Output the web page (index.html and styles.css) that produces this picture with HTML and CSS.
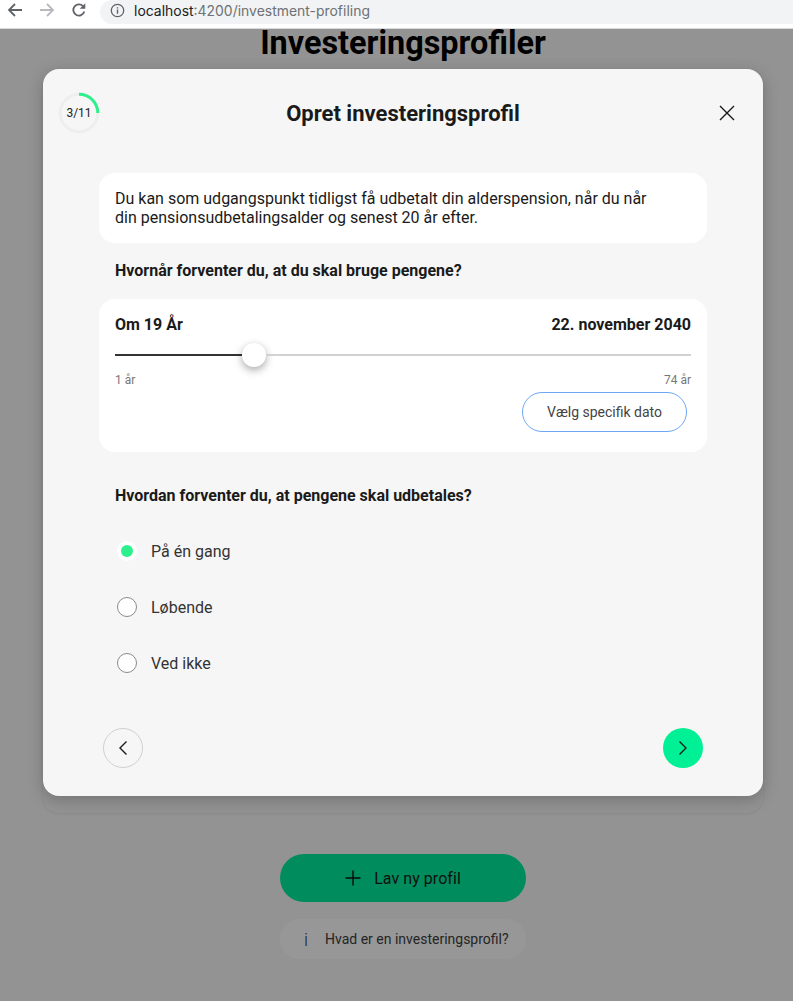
FILE: index.html
```html
<!DOCTYPE html>
<html lang="da">
<head>
<meta charset="utf-8">
<title>Investeringsprofiler</title>
<link rel="stylesheet" href="styles.css">
</head>
<body>
<header class="toolbar">
  <svg class="nav-icon" width="16" height="16" viewBox="0 0 16 16"><path d="M15 8H2M8 2L2 8l6 6" fill="none" stroke="#5f6368" stroke-width="1.8"/></svg>
  <svg class="nav-icon nav-fwd" width="16" height="16" viewBox="0 0 16 16"><path d="M1 8h13M8 2l6 6-6 6" fill="none" stroke="#b8babd" stroke-width="1.8"/></svg>
  <svg class="nav-icon nav-reload" width="16" height="16" viewBox="0 0 16 16"><path d="M13.3 9.6A5.6 5.6 0 1 1 12 4.1" fill="none" stroke="#5f6368" stroke-width="1.8"/><path d="M14.3 1.2v5.6H8.7z" fill="#5f6368"/></svg>
  <div class="url">
    <svg width="15" height="15" viewBox="0 0 15 15"><circle cx="7.5" cy="7.5" r="6.2" fill="none" stroke="#5f6368" stroke-width="1.3"/><path d="M7.5 6.6v4.2M7.5 4.2v1.4" stroke="#5f6368" stroke-width="1.4"/></svg>
    <span class="url-host">localhost</span><span class="url-path">:4200/investment-profiling</span>
  </div>
</header>
<main class="page">
  <h1 class="page-title">Investeringsprofiler</h1>
  <div class="under-card"></div>
  <div class="page-actions">
    <button class="new-btn">
      <svg width="16" height="16" viewBox="0 0 16 16"><path d="M8 0.5v15M0.5 8h15" stroke="#111" stroke-width="1.4"/></svg>
      <span>Lav ny profil</span>
    </button>
    <button class="what-btn"><span class="what-i">i</span><span>Hvad er en investeringsprofil?</span></button>
  </div>
  <div class="overlay"></div>
  <section class="modal">
    <div class="modal-head">
      <div class="progress">
        <svg width="42" height="42" viewBox="0 0 42 42">
          <circle cx="21" cy="21" r="18.8" fill="none" stroke="#eeeeee" stroke-width="3"/>
          <path d="M21 2.2A18.8 18.8 0 0 1 39.8 21" fill="none" stroke="#2bf08c" stroke-width="3"/>
        </svg>
        <span class="progress-text">3/11</span>
      </div>
      <h2 class="modal-title">Opret investeringsprofil</h2>
      <svg class="close" width="16" height="16" viewBox="0 0 16 16"><path d="M1 1l14 14M15 1L1 15" stroke="#1a1a1a" stroke-width="1.4"/></svg>
    </div>
    <div class="modal-body">
      <p class="info">Du kan som udgangspunkt tidligst få udbetalt din alderspension, når du når din&nbsp;pensionsudbetalingsalder og senest 20 år efter.</p>
      <h3 class="question q-first">Hvornår forventer du, at du skal bruge pengene?</h3>
      <div class="slider-card">
        <div class="slider-top"><span>Om 19 År</span><span>22. november 2040</span></div>
        <div class="slider">
          <div class="track-done"></div>
          <div class="thumb"></div>
          <div class="track-rest"></div>
        </div>
        <div class="slider-scale"><span>1 år</span><span>74 år</span></div>
        <div class="date-row"><button class="date-btn">Vælg specifik dato</button></div>
      </div>
      <h3 class="question q-second">Hvordan forventer du, at pengene skal udbetales?</h3>
      <ul class="radios">
        <li class="radio-row"><span class="radio radio-on"></span>På én gang</li>
        <li class="radio-row"><span class="radio"></span>Løbende</li>
        <li class="radio-row"><span class="radio"></span>Ved ikke</li>
      </ul>
      <div class="modal-nav">
        <button class="circle-btn">
          <svg width="10" height="16" viewBox="0 0 10 16"><path d="M8.5 1.5L2 8l6.5 6.5" fill="none" stroke="#1a1a1a" stroke-width="1.4"/></svg>
        </button>
        <button class="circle-btn circle-next">
          <svg width="10" height="16" viewBox="0 0 10 16"><path d="M1.5 1.5L8 8l-6.5 6.5" fill="none" stroke="#1a1a1a" stroke-width="1.4"/></svg>
        </button>
      </div>
    </div>
  </section>
</main>
</body>
</html>
```
FILE: styles.css
```css
* { box-sizing: border-box; }
html, body { margin: 0; padding: 0; }
body {
  width: 793px;
  height: 1001px;
  overflow: hidden;
  font-family: Roboto, "Liberation Sans", sans-serif;
  color: #1a1a1a;
  background: #fff;
}
.toolbar {
  height: 29px;
  display: flex;
  align-items: flex-start;
  background: #fff;
  border-bottom: 1px solid #d9d9d9;
  padding-left: 7px;
}
.nav-icon { margin-top: 2px; flex: none; }
.nav-fwd { margin-left: 16px; }
.nav-reload { margin-left: 16px; }
.url {
  margin-left: 13px;
  flex: 1;
  height: 24px;
  background: #f1f3f4;
  border-radius: 12px 0 0 12px;
  display: flex;
  align-items: center;
  padding: 0 0 4px 10px;
  font-family: Inter, Roboto, sans-serif;
  font-size: 13.95px;
  white-space: nowrap;
}
.url svg { margin-right: 9px; }
.url-host { color: #202124; }
.url-path { color: #6e7175; }
.page {
  position: relative;
  height: 972px;
  background: #f6f6f6;
}
.page-title {
  margin: 0 0 12px;
  height: 28px;
  font-size: 32.4px;
  line-height: 28px;
  font-weight: 700;
  text-align: center;
  color: #000;
  padding-left: 13px;
}
.under-card {
  margin: 0 30px 0 43px;
  height: 744px;
  background: #f6f6f6;
  border-radius: 16px;
  box-shadow: 0 1px 3px rgba(0,0,0,.08);
}
.page-actions {
  margin-top: 41px;
  display: flex;
  flex-direction: column;
  align-items: center;
  gap: 17px;
  padding-left: 13px;
}
.new-btn, .what-btn {
  width: 246px;
  border: 0;
  border-radius: 24px;
  display: flex;
  align-items: center;
  font-family: inherit;
  color: #1a1a1a;
}
.new-btn {
  height: 48px;
  background: #00e999;
  justify-content: center;
  gap: 13px;
  font-size: 16px;
  letter-spacing: .05px;
  padding: 0;
}
.what-btn {
  height: 40px;
  background: #fcfcfc;
  color: #3c3c3c;
  font-size: 14px;
  padding: 0 0 0 24px;
  text-align: left;
}
.what-i { width: 21px; font-size: 18px; font-weight: 300; }
.overlay {
  position: absolute;
  inset: 0;
  background: rgba(0,0,0,.4);
}
.modal {
  position: absolute;
  left: 43px;
  top: 40px;
  width: 720px;
  height: 727px;
  background: #f6f6f6;
  border-radius: 16px;
  box-shadow: 0 4px 16px rgba(0,0,0,.22);
}
.modal-head {
  position: relative;
  height: 104px;
  display: flex;
  justify-content: center;
  padding-top: 32px;
}
.progress {
  position: absolute;
  left: 15px;
  top: 23px;
  width: 42px;
  height: 42px;
}
.progress-text {
  position: absolute;
  inset: 0;
  display: flex;
  align-items: center;
  justify-content: center;
  font-size: 12px;
  color: #222;
}
.modal-title {
  margin: 0;
  font-size: 22px;
  line-height: 26px;
  font-weight: 700;
  color: #1a1a1a;
}
.close { position: absolute; left: 676px; top: 36px; }
.modal-body { padding: 0 56px; }
.info {
  margin: 0;
  height: 70px;
  background: #fff;
  border-radius: 16px;
  padding: 16px 50px 0 16px;
  font-size: 16px;
  line-height: 19px;
  color: #1a1a1a;
}
.question {
  margin: 0;
  padding-left: 16px;
  font-size: 16px;
  line-height: 19px;
  font-weight: 700;
  color: #1a1a1a;
}
.q-first { margin-top: 18px; }
.q-second { margin-top: 34px; }
.slider-card {
  margin-top: 19px;
  height: 153px;
  background: #fff;
  border-radius: 16px;
  padding: 16px 16px 0;
}
.slider-top {
  display: flex;
  justify-content: space-between;
  font-size: 16px;
  line-height: 19px;
  font-weight: 700;
}
.slider {
  margin-top: 9px;
  height: 24px;
  display: flex;
  align-items: center;
}
.track-done { width: 127px; height: 2px; background: #333; }
.track-rest { flex: 1; height: 2px; background: #d2d2d2; }
.thumb {
  width: 24px;
  height: 24px;
  border-radius: 50%;
  background: #fff;
  box-shadow: 0 3px 8px rgba(0,0,0,.35);
  flex: none;
}
.slider-scale {
  margin-top: 6px;
  display: flex;
  justify-content: space-between;
  font-size: 12px;
  line-height: 14px;
  color: #777;
}
.date-row { display: flex; justify-content: flex-end; padding: 5px 4px 0 0; }
.date-btn {
  width: 165px;
  height: 40px;
  background: #fff;
  border: 1px solid #6ea6f5;
  border-radius: 20px;
  font-family: inherit;
  font-size: 14px;
  color: #444;
  padding: 0;
}
.radios { list-style: none; margin: 18px 0 0; padding: 0; }
.radio-row {
  height: 56px;
  display: flex;
  align-items: center;
  padding-left: 18px;
  font-size: 16px;
  color: #333;
}
.radio {
  width: 20px;
  height: 20px;
  border-radius: 50%;
  background: #fff;
  border: 1px solid #8a8a8a;
  margin-right: 14px;
  display: flex;
  align-items: center;
  justify-content: center;
}
.radio-on { border: 0; }
.radio-on::after {
  content: "";
  width: 12px;
  height: 12px;
  border-radius: 50%;
  background: #2bf08c;
}
.modal-nav {
  margin-top: 37px;
  display: flex;
  justify-content: space-between;
  padding: 0 4px;
}
.circle-btn {
  width: 40px;
  height: 40px;
  border-radius: 50%;
  border: 1px solid #d0d0d0;
  background: transparent;
  padding: 0;
  display: flex;
  align-items: center;
  justify-content: center;
}
.circle-next { border: 0; background: #00f096; }
```
